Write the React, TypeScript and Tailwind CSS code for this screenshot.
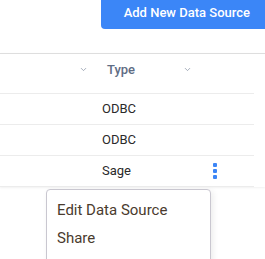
import { ChevronDown } from 'lucide-react';

const rows = ['ODBC', 'ODBC', 'Sage'];

export default function App() {
  return (
    <div className="relative w-[265px] h-[259px] overflow-hidden bg-white font-['Roboto',sans-serif]">
      {/* Toolbar */}
      <div className="flex justify-end h-[53px] -mr-[8px]">
        <button className="-mt-[3px] h-[32px] pl-[23px] pr-[23px] bg-[#3b86f7] rounded-[4px] text-white text-[13px] font-medium">
          Add New Data Source
        </button>
      </div>

      {/* Table */}
      <div className="border-t border-[#dedede] shadow-[0_1px_2px_rgba(0,0,0,0.06)]">
        <div className="flex items-center h-[40px] pb-[8px] border-b border-[#ececec] mr-[11px]">
          <div className="w-[79px]" />
          <ChevronDown className="w-[9px] h-[9px] text-[#8a94a6]" strokeWidth={2} />
          <div className="w-[19px]" />
          <span className="text-[13px] font-medium text-[#5f6d84] w-[76px]">Type</span>
          <ChevronDown className="w-[9px] h-[9px] text-[#8a94a6]" strokeWidth={2} />
        </div>
        {rows.map((r, i) => (
          <div key={i} className="flex items-center h-[31px] border-b border-[#ececec] mr-[11px]">
            <span className="pl-[102px] w-[213px] text-[13px] text-[#2a2a2a]">{r}</span>
            {i === 2 && (
              <div className="flex flex-col gap-[2px]">
                <span className="w-[4px] h-[4px] bg-[#3d86f6] rounded-[1px]" />
                <span className="w-[4px] h-[4px] bg-[#3d86f6] rounded-[1px]" />
                <span className="w-[4px] h-[4px] bg-[#3d86f6] rounded-[1px]" />
              </div>
            )}
          </div>
        ))}
      </div>

      {/* Row menu */}
      <div className="absolute left-[46px] top-[189px] w-[165px] h-[90px] bg-white border border-[#c9c7d0] rounded-[4px] shadow-[2px_2px_6px_rgba(0,0,0,0.08)] pt-[6px]">
        <div className="h-[28px] flex items-center px-[10px] text-[15px] text-[#4a3b2e]">Edit Data Source</div>
        <div className="h-[28px] flex items-center px-[10px] text-[15px] text-[#4a3b2e]">Share</div>
      </div>
    </div>
  );
}
